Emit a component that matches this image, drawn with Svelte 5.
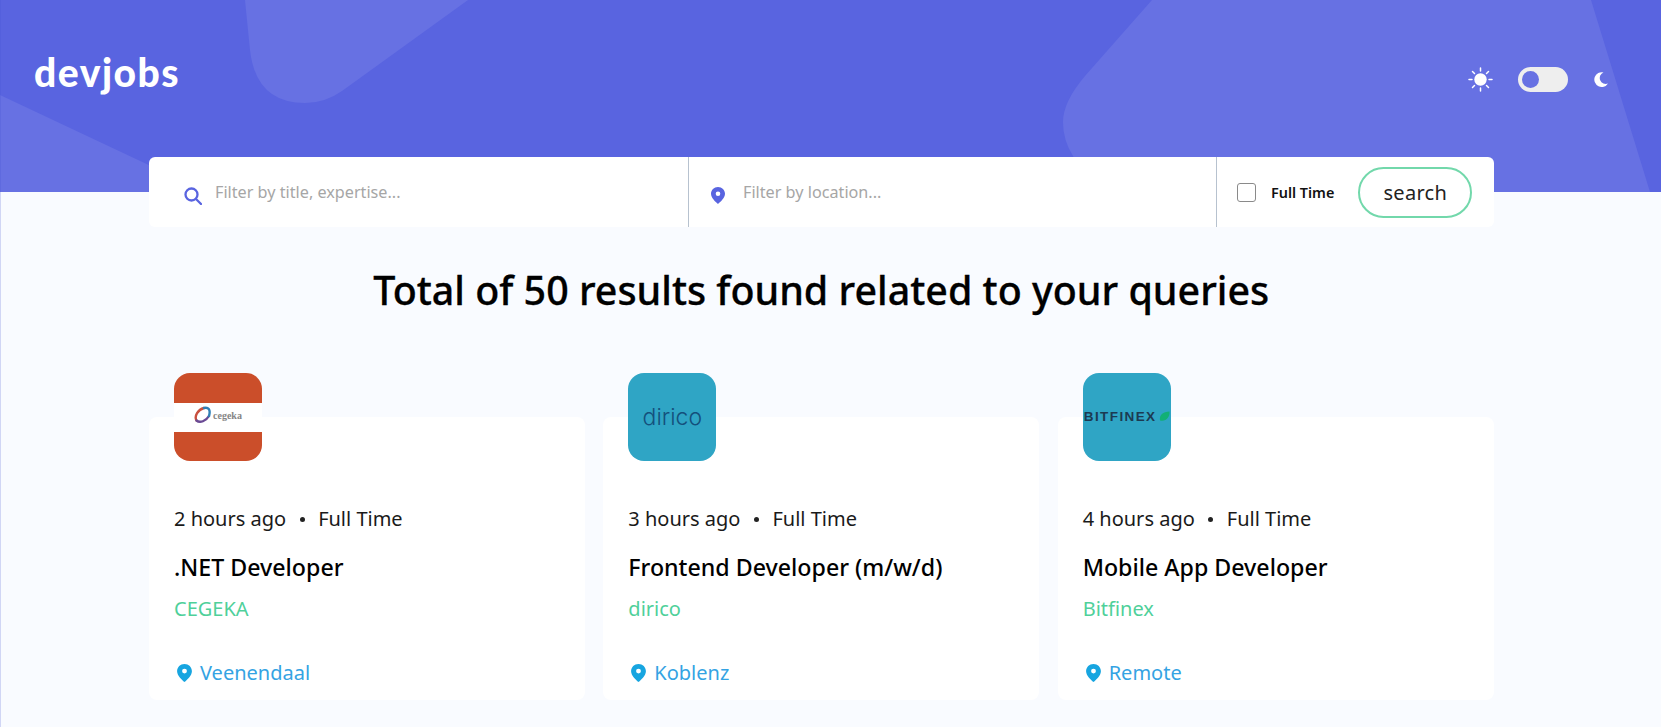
<script>
  const jobs = [
    { when: '2 hours ago', type: 'Full Time', title: '.NET Developer', company: 'CEGEKA', place: 'Veenendaal', logo: 'cegeka' },
    { when: '3 hours ago', type: 'Full Time', title: 'Frontend Developer (m/w/d)', company: 'dirico', place: 'Koblenz', logo: 'dirico' },
    { when: '4 hours ago', type: 'Full Time', title: 'Mobile App Developer', company: 'Bitfinex', place: 'Remote', logo: 'bitfinex' }
  ];
</script>

<div class="page">
  <header class="banner">
    <svg class="shapes" width="1661" height="192" viewBox="0 0 1661 192" aria-hidden="true">
      <path d="M245 0 L250 50 Q256 103 305 103 Q325 103 342 91 L468 0 Z" fill="#6771e3" />
      <path d="M0 95 L206 192 L0 192 Z" fill="#6771e3" />
      <path d="M1152 0 L1085 76 Q1063 102 1063 122 Q1063 140 1073 156 L1090 192 L1650 192 L1591 0 Z" fill="#6771e3" />
    </svg>
    <div class="top">
      <div class="logo">devjobs</div>
      <div class="theme">
        <svg width="25" height="25" viewBox="0 0 25 25" fill="none" stroke="#fff" stroke-width="1.5" stroke-linecap="round">
          <circle cx="12.500" cy="12.500" r="6.200" fill="#fff" stroke="none" />
          <path d="M12.500 1v3M12.500 21v3M1 12.500h3M21 12.500h3M4.500 4.500l2 2M18.500 18.500l2 2M4.500 20.500l2-2M18.500 6.500l2-2" />
        </svg>
        <span class="toggle"><span class="knob"></span></span>
        <svg width="15" height="15" viewBox="0 0 15 15">
          <path d="M10.500 0.400A7.400 7.400 0 1 0 15 11.500 5.400 5.400 0 0 1 10.500 0.400Z" fill="#fff" />
        </svg>
      </div>
    </div>
  </header>

  <main class="content">
    <form class="search">
      <label class="field first">
        <svg width="18" height="18" viewBox="0 0 18 18" fill="none" stroke="#5964e0" stroke-width="2.300">
          <circle cx="7.500" cy="7.500" r="6" />
          <path d="M12 12L17 17" stroke-linecap="round" />
        </svg>
        <span class="hint">Filter by title, expertise...</span>
      </label>
      <label class="field second">
        <svg width="14" height="17" viewBox="0 0 14 17">
          <path fill-rule="evenodd" d="M7 0C3 0 0 3 0 6.800 0 10.800 4.500 15 7 17c2.500-2 7-6.200 7-10.200C14 3 11 0 7 0Zm0 9a2.300 2.300 0 1 1 0-4.600A2.300 2.300 0 0 1 7 9Z" fill="#5964e0" />
        </svg>
        <span class="hint">Filter by location...</span>
      </label>
      <div class="opts">
        <span class="check"></span>
        <span class="full">Full Time</span>
        <button type="button" class="go">search</button>
      </div>
    </form>

    <h1>Total of 50 results found related to your queries</h1>

    <div class="grid">
      {#each jobs as job}
        <article class="card">
          <div class="logo-box {job.logo}">
            {#if job.logo === 'cegeka'}
              <div class="strip">
                <svg width="18" height="18" viewBox="0 0 18 18" fill="none" stroke-width="2.400" stroke-linecap="round">
                  <path d="M2.500 14.500C0 10 4 3.500 10 2" stroke="#c9503f" />
                  <path d="M2.500 14.500C6 17.500 12 15 15 10" stroke="#6a4a94" />
                  <path d="M10 2C14 1 17 3 15 10" stroke="#2f7fb5" />
                </svg>
                <span>cegeka</span>
              </div>
            {:else if job.logo === 'dirico'}
              <span class="dirico-name">dirico</span>
            {:else}
              <span class="bit-name">BITFINEX</span>
              <svg class="leaf" width="11" height="11" viewBox="0 0 11 11"><path d="M1 9.500C0 4 4 .5 10.500 .5 11 6 7 11 1 9.500Z" fill="#12b076" /></svg>
            {/if}
          </div>
          <div class="meta"><span>{job.when}</span><i></i><span>{job.type}</span></div>
          <h2>{job.title}</h2>
          <div class="company">{job.company}</div>
          <div class="place">
            <svg width="15" height="18" viewBox="0 0 14 17">
              <path fill-rule="evenodd" d="M7 0C3 0 0 3 0 6.800 0 10.800 4.500 15 7 17c2.500-2 7-6.200 7-10.200C14 3 11 0 7 0Zm0 9a2.300 2.300 0 1 1 0-4.600A2.300 2.300 0 0 1 7 9Z" fill="#17a5e0" />
            </svg>
            <span>{job.place}</span>
          </div>
        </article>
      {/each}
    </div>
  </main>
</div>

<style>
  :global(body) {
    background: #f9fbff;
    overflow: hidden;
  }

  .page {
    position: relative;
    height: 727px;
    overflow: hidden;
    font-family: "Noto Sans", sans-serif;
  }
  /* thin tinted line down the left edge of the window */
  .page::after {
    content: "";
    position: absolute;
    inset: 0 auto 0 0;
    width: 1px;
    background: rgba(70, 80, 210, 0.22);
  }

  .banner {
    position: relative;
    height: 192px;
    background: #5964e0;
  }
  .shapes {
    position: absolute;
    inset: 0;
  }
  .top {
    position: relative;
    display: flex;
    justify-content: space-between;
    align-items: flex-start;
    padding: 47px 53px 0 34px;
  }
  .logo {
    font-family: Lato, sans-serif;
    font-weight: 900;
    font-size: 39px;
    letter-spacing: 1.500px;
    line-height: 50px;
    color: #fff;
  }
  .theme {
    display: flex;
    align-items: center;
    gap: 25px;
    padding-top: 20px;
  }
  .toggle {
    display: flex;
    align-items: center;
    width: 50px;
    height: 25px;
    padding: 0 4px;
    box-sizing: border-box;
    background: #eee;
    border-radius: 13px;
  }
  .knob {
    width: 17px;
    height: 17px;
    border-radius: 50%;
    background: #6771e3;
  }

  .content {
    width: 1344.5px;
    margin-left: 149px;
  }

  .search {
    display: grid;
    grid-template-columns: 540px 528px 1fr;
    height: 70px;
    margin-top: -35px;
    position: relative;
    background: #fff;
    border-radius: 6px;
  }
  .field {
    display: flex;
    align-items: center;
    border-right: 1px solid #b7c2cf;
  }
  .field svg {
    margin-top: 7px;
  }
  .field.first {
    gap: 13px;
    padding-left: 35px;
  }
  .field.second {
    gap: 18px;
    padding-left: 22px;
  }
  .hint {
    font-size: 16.200px;
    color: #a6a6a6;
  }
  .opts {
    display: flex;
    align-items: center;
    padding-left: 20px;
  }
  .check {
    width: 19px;
    height: 19px;
    box-sizing: border-box;
    border: 1.5px solid #8a8a8a;
    border-radius: 3px;
  }
  .full {
    margin-left: 15px;
    font-size: 14.400px;
    font-weight: 600;
    color: #111;
  }
  .go {
    margin-left: 24px;
    width: 114px;
    height: 51px;
    background: #fff;
    border: 2px solid #72d8ab;
    border-radius: 26px;
    font: 20px "Noto Sans", sans-serif;
    letter-spacing: 0.3px;
    color: #222;
  }

  h1 {
    margin: 38px 0 0;
    text-align: center;
    font-size: 39.400px;
    line-height: 50px;
    font-weight: 500;
    -webkit-text-stroke: 0.3px #000;
    color: #000;
  }

  .grid {
    display: grid;
    grid-template-columns: repeat(3, 1fr);
    gap: 18.5px;
    margin-top: 102px;
  }
  .card {
    position: relative;
    height: 283px;
    padding: 0 25px;
    background: #fff;
    border-radius: 8px;
  }

  .logo-box {
    position: absolute;
    top: -44px;
    left: 25px;
    width: 88px;
    height: 88px;
    border-radius: 16px;
    overflow: hidden;
    display: flex;
    align-items: center;
    justify-content: center;
    gap: 2px;
    background: #2fa5c5;
  }
  .logo-box.cegeka {
    background: #cb4e2a;
  }
  .strip {
    flex: 1;
    height: 29px;
    box-sizing: border-box;
    padding-bottom: 4px;
    background: #fff;
    display: flex;
    align-items: center;
    justify-content: center;
    gap: 1px;
    font-family: "Liberation Serif", serif;
    font-size: 10px;
    font-weight: 700;
    color: #858585;
  }
  .dirico-name {
    font-family: Inter, sans-serif;
    font-weight: 300;
    font-size: 23px;
    color: #14507c;
  }
  .bit-name {
    font-family: "Liberation Sans", sans-serif;
    font-size: 13.500px;
    letter-spacing: 1.400px;
    font-weight: 700;
    color: #1c3a52;
    margin-top: -2px;
  }
  .leaf {
    flex: none;
    margin-top: -2px;
  }

  .meta {
    display: flex;
    align-items: center;
    gap: 13.500px;
    padding-top: 90px;
    font-size: 20px;
    line-height: 24px;
    color: #1a1a1a;
  }
  .meta i {
    width: 5px;
    height: 5px;
    border-radius: 50%;
    background: #222;
  }
  h2 {
    margin: 22px 0 0;
    font-size: 23.200px;
    line-height: 28px;
    font-weight: 500;
    color: #000;
  }
  .company {
    margin-top: 16px;
    font-size: 20px;
    line-height: 24px;
    color: #4fd09a;
  }
  .place {
    display: flex;
    align-items: center;
    gap: 8px;
    margin-top: 40px;
    padding-left: 3px;
    font-size: 20px;
    line-height: 24px;
    color: #34a3e3;
  }
</style>
